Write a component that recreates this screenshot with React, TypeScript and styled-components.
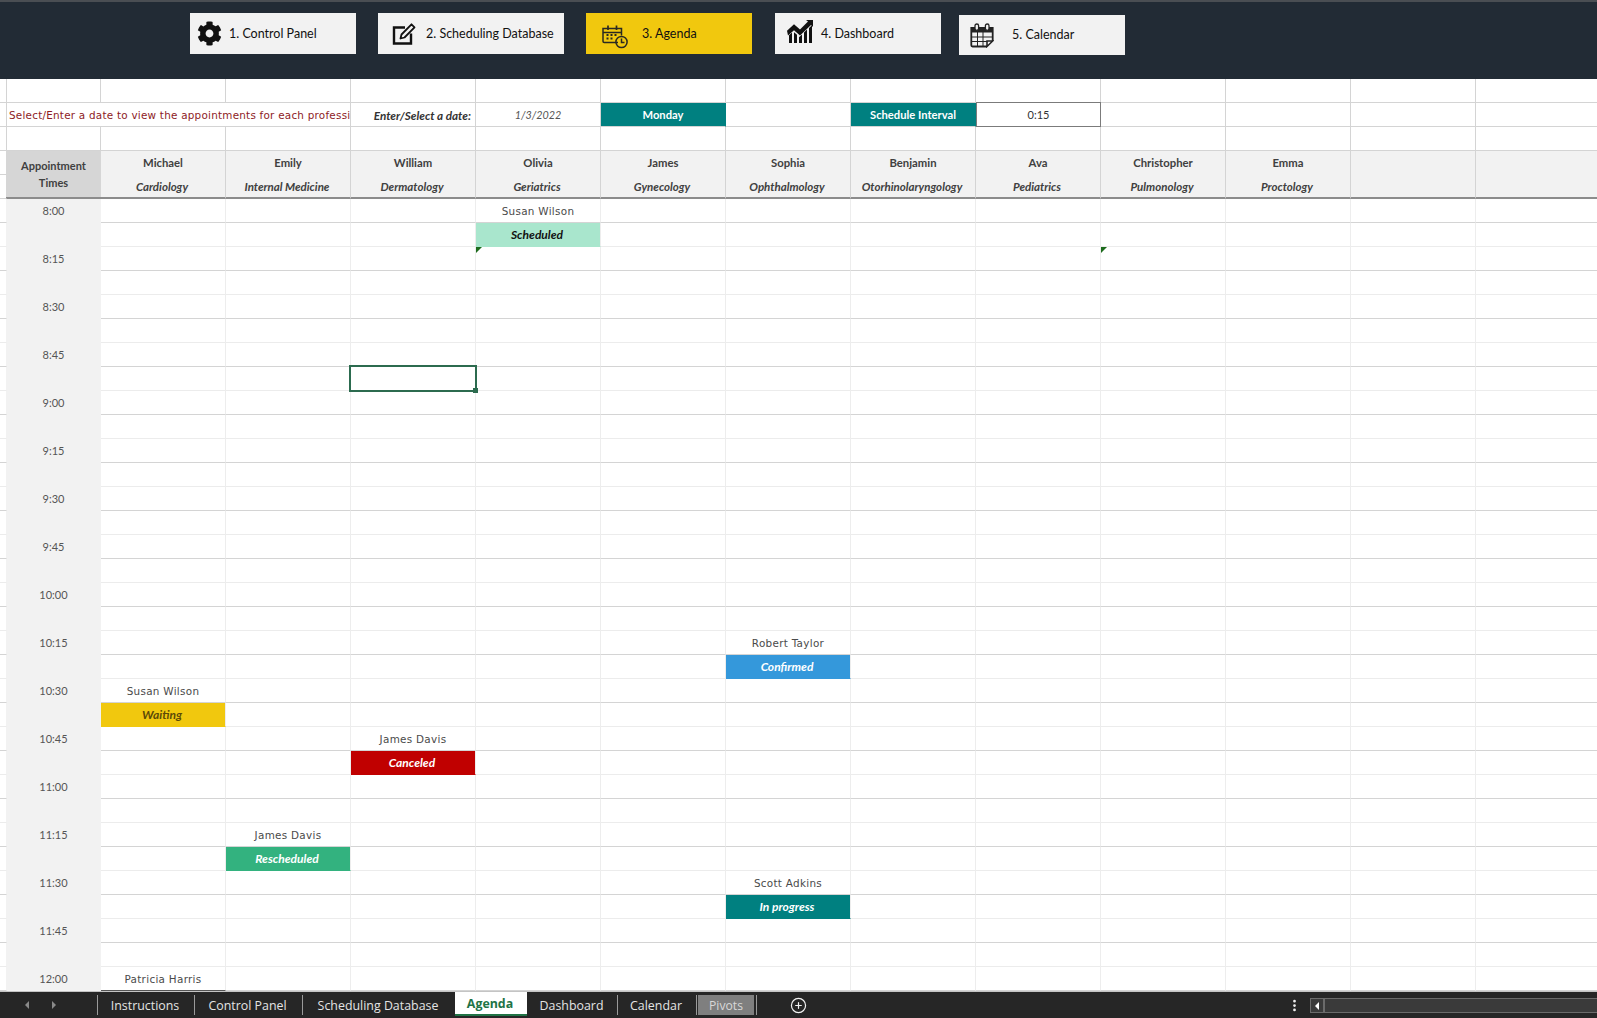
import React from "react";
import styled, { createGlobalStyle } from "styled-components";
import { FaCog } from "react-icons/fa";
import { CirclePlus, EllipsisVertical } from "lucide-react";

const GlobalStyle = createGlobalStyle`
  html, body {
    margin: 0;
    padding: 0;
    background: #fff;
  }
  * {
    box-sizing: border-box;
  }
`;

const Page = styled.div`
  width: 1597px;
  height: 1018px;
  display: flex;
  flex-direction: column;
  overflow: hidden;
  font-family: "Lato", "Liberation Sans", sans-serif;
`;

// top navigation
const NavBar = styled.div`
  height: 79px;
  flex: none;
  display: flex;
  align-items: flex-start;
  padding: 11px 0 0 190px;
  background: #222b35;
  border-top: 2px solid #4a4e53;
`;

const NavButton = styled.div<{ $width: number; $gap: number; $active?: boolean; $drop?: number }>`
  width: ${(p) => p.$width}px;
  height: ${(p) => (p.$drop ? 40 : 41)}px;
  margin-left: ${(p) => p.$gap}px;
  margin-top: ${(p) => p.$drop || 0}px;
  display: flex;
  align-items: center;
  background: ${(p) => (p.$active ? "#f1c80e" : "#f2f2f2")};
  color: #111;
  font-size: 12.5px;
`;

const NavIcon = styled.span<{ $left: number; $width: number; $nudge?: number }>`
  width: ${(p) => p.$width}px;
  margin-left: ${(p) => p.$left}px;
  margin-top: ${(p) => p.$nudge || 0}px;
  flex: none;
  display: flex;
  align-items: center;
  justify-content: center;
  svg {
    display: block;
  }
`;

const NavLabel = styled.span<{ $left: number }>`
  margin-left: ${(p) => p.$left}px;
  padding-bottom: 1px;
  white-space: nowrap;
`;

// worksheet
const Sheet = styled.div`
  flex: none;
  height: 912px;
  overflow: hidden;
  display: grid;
  grid-template-columns: 7px 94px repeat(12, 125px);
  grid-auto-rows: 24px;
  width: 1601px;
  background: #fff;
`;

const Cell = styled.div<{ $soft?: boolean; $softCol?: boolean }>`
  position: relative;
  border-bottom: 1px solid ${(p) => (p.$soft ? "#ececec" : "#d4d4d4")};
  border-right: 1px solid ${(p) => (p.$softCol || p.$soft ? "#ededed" : "#d4d4d4")};
  display: flex;
  align-items: center;
  justify-content: center;
  white-space: nowrap;
  overflow: hidden;
  font-size: 11px;
  color: #444;
`;

const Gutter = styled(Cell)<{ $topRow?: boolean }>`
  border-right: 1px solid ${(p) => (p.$topRow ? "#d4d4d4" : "transparent")};
`;

const NoticeCell = styled(Cell)`
  grid-column: span 3;
  justify-content: flex-start;
  padding-left: 2px;
  color: #8e1b1f;
  font-family: "DejaVu Sans", sans-serif;
  font-size: 10.4px;
  letter-spacing: 0.24px;
`;

const PromptCell = styled(Cell)`
  justify-content: flex-end;
  padding-right: 4px;
  font-style: italic;
  font-weight: 700;
  font-size: 11.7px;
  color: #333;
`;

const DateCell = styled(Cell)`
  font-style: italic;
  font-size: 10.8px;
  color: #555;
`;

const TealCell = styled(Cell)`
  background: #008080;
  border-right-color: #008080;
  color: #fff;
  font-weight: 700;
  font-size: 11.2px;
`;

const IntervalCell = styled(Cell)`
  margin-top: -1px;
  border: 1px solid #7b7b7b;
  color: #333;
  font-size: 11px;
`;

const TimesHead = styled.div`
  grid-row: span 2;
  margin-left: -1px;
  background: #d6d6d6;
  border-bottom: 2px solid #8c8c8c;
  display: flex;
  flex-direction: column;
  align-items: center;
  justify-content: center;
  padding-bottom: 1px;
  font-size: 11px;
  line-height: 17px;
  font-weight: 700;
  color: #404040;
`;

const HeadCell = styled(Cell)<{ $lower?: boolean }>`
  background: #f2f2f2;
  border-bottom: ${(p) => (p.$lower ? "2px solid #8c8c8c" : "0")};
  font-size: ${(p) => (p.$lower ? "11.5px" : "11.3px")};
  font-style: ${(p) => (p.$lower ? "italic" : "normal")};
  font-weight: 700;
  color: #404040;
  padding: ${(p) => (p.$lower ? "0 2px 0 0" : "0 0 2px 0")};
`;

const TimeCell = styled.div`
  margin-left: -1px;
  background: #f2f2f2;
  display: flex;
  align-items: center;
  justify-content: center;
  padding-bottom: 1px;
  font-size: 11px;
  color: #555;
`;

const ClientCell = styled(Cell)<{ $underline?: boolean }>`
  font-family: "DejaVu Sans", sans-serif;
  font-size: 10.4px;
  letter-spacing: 0.3px;
  color: #4a4a4a;
  ${(p) => (p.$underline ? "border-bottom: 1px solid #555;" : "")}
`;

const StatusCell = styled(Cell)<{ $bg: string; $ink: string }>`
  background: ${(p) => p.$bg};
  color: ${(p) => p.$ink};
  border-bottom-color: ${(p) => p.$bg};
  font-style: italic;
  font-weight: 700;
  font-size: 12px;
  padding-right: 2px;
`;

const CommentMark = styled.i`
  position: absolute;
  left: 0;
  top: 0;
  width: 6px;
  height: 6px;
  background: #1c6b1c;
  clip-path: polygon(0 0, 100% 0, 0 100%);
`;

const Selection = styled.div`
  position: absolute;
  left: -2px;
  top: -2px;
  right: -2px;
  bottom: -2px;
  border: 2px solid #2c6b4f;
`;

const SelectionHandle = styled.i`
  position: absolute;
  right: -3px;
  bottom: -3px;
  width: 5px;
  height: 5px;
  background: #2c6b4f;
`;

const SelectedCell = styled(Cell)`
  overflow: visible;
  z-index: 2;
`;

// sheet tabs
const TabBar = styled.div`
  flex: 1;
  display: flex;
  align-items: stretch;
  background: #262626;
  border-top: 1px solid #c4c4c4;
  color: #e4e4e4;
  font-family: "Open Sans", "Liberation Sans", sans-serif;
`;

const TabArrows = styled.div`
  width: 97px;
  flex: none;
  display: flex;
  align-items: center;
  gap: 21px;
  padding: 0 0 0 24px;
  svg {
    display: block;
  }
`;

const Tab = styled.div<{ $width: number; $sep?: boolean }>`
  width: ${(p) => p.$width}px;
  flex: none;
  margin: 3px 0;
  padding-right: 2px;
  display: flex;
  align-items: center;
  justify-content: center;
  font-size: 12.4px;
  border-left: 1px solid ${(p) => (p.$sep ? "#9a9a9a" : "transparent")};
`;

const ActiveTab = styled(Tab)`
  margin: 0 0 2px 0;
  background: #fff;
  border-left: 0;
  border-bottom: 2px solid #217346;
  color: #217346;
  font-weight: 700;
`;

const GreyTab = styled.div`
  width: 56px;
  flex: none;
  margin: 3px 2px 3px 1px;
  display: flex;
  align-items: center;
  justify-content: center;
  font-size: 12.2px;
  color: #d8d8d8;
  background: #7f7f7f;
`;

const TabEnd = styled.div`
  width: 1px;
  flex: none;
  margin: 3px 0;
  background: #9a9a9a;
`;

const AddTab = styled.div`
  width: 17px;
  flex: none;
  margin-left: 33px;
  display: flex;
  align-items: center;
  color: #f2f2f2;
`;

const SheetMenu = styled.div`
  margin-left: 479px;
  width: 16px;
  flex: none;
  display: flex;
  align-items: center;
  justify-content: center;
  color: #f2f2f2;
`;

const ScrollBar = styled.div`
  margin: 6px 0 5px 8px;
  flex: 1;
  display: flex;
  border: 1px solid #6b6b6b;
  border-right: 0;
  background: #3a3a3a;
`;

const ScrollButton = styled.div`
  width: 14px;
  flex: none;
  display: flex;
  align-items: center;
  justify-content: center;
  border-right: 2px solid #6b6b6b;
`;

const GearIcon = () => <FaCog size={25} color="#111" />;

const EditIcon = () => (
  <svg width="24" height="22" viewBox="0 0 24 22" fill="none" stroke="#111">
    <path d="M13 4.5H2v16h17V10.5" strokeWidth="2.4" />
    <path d="M8.5 15.5l1-4L19.5 1.3l3 3L12.5 14.5z" strokeWidth="1.8" strokeLinejoin="round" />
  </svg>
);

const AgendaIcon = () => (
  <svg width="26" height="25" viewBox="0 0 26 25" fill="none" stroke="#2b2a22" strokeWidth="1.5">
    <path d="M16 18.5H2.2a1.2 1.2 0 0 1-1.2-1.2V4.5h18.5v7" />
    <path d="M1 8.5h18.5" />
    <path d="M6 1.5v4.5M14.5 1.5v4.5" strokeWidth="1.7" />
    <path d="M4.5 11h2M8.5 11h2M12.5 11h2M4.5 14.5h2M8.5 14.5h2" strokeWidth="1.9" />
    <circle cx="19.5" cy="18" r="5.6" />
    <path d="M19.5 14.5V18.5h3" />
  </svg>
);

const TrendIcon = () => (
  <svg width="26" height="23" viewBox="0 0 26 23" fill="#111">
    <path d="M0 10.8L7 4.3l6 5.2L21 1.6 19 0h7v7l-2-2-11 10.6-6-5.3-6 5.3z" />
    <path d="M2 15.2l3-2.6V23H2zM7 12.2l3 2.6V23H7zM12 17.2l3-2.8V23h-3zM17 12.6l3-3V23h-3zM22 8l3-2.8V23h-3z" />
  </svg>
);

const CalendarIcon = () => (
  <svg width="24" height="25" viewBox="0 0 24 25" fill="none" stroke="#222">
    <path d="M17 23.5H2.5a1.2 1.2 0 0 1-1.2-1.2V5h21.4v13" strokeWidth="1.8" />
    <path d="M1.5 5.2h21V9h-21z" fill="#222" strokeWidth="1" />
    <path d="M17 23.5l5.7-5.5H17z" strokeWidth="1.6" />
    <path d="M1.5 14h21M1.5 18.5H17M7.5 9v14M13 9v14" strokeWidth="1" />
    <rect x="5" y="1" width="3.6" height="6.4" rx="1.8" fill="#f2f2f2" strokeWidth="1.3" />
    <rect x="15.4" y="1" width="3.6" height="6.4" rx="1.8" fill="#f2f2f2" strokeWidth="1.3" />
  </svg>
);

const navItems = [
  { label: "1. Control Panel", width: 166, gap: 0, iconLeft: 7, iconWidth: 25, labelLeft: 7, icon: <GearIcon /> },
  { label: "2. Scheduling Database", width: 186, gap: 22, iconLeft: 14, iconWidth: 24, labelLeft: 10, icon: <EditIcon /> },
  { label: "3. Agenda", width: 166, gap: 22, iconLeft: 16, iconWidth: 26, labelLeft: 14, icon: <AgendaIcon />, active: true, nudge: 5 },
  { label: "4. Dashboard", width: 166, gap: 23, iconLeft: 12, iconWidth: 26, labelLeft: 8, icon: <TrendIcon />, nudge: -5 },
  { label: "5. Calendar", width: 166, gap: 18, iconLeft: 11, iconWidth: 24, labelLeft: 18, icon: <CalendarIcon />, drop: 2 },
];

const doctors = [
  ["Michael", "Cardiology"],
  ["Emily", "Internal Medicine"],
  ["William", "Dermatology"],
  ["Olivia", "Geriatrics"],
  ["James", "Gynecology"],
  ["Sophia", "Ophthalmology"],
  ["Benjamin", "Otorhinolaryngology"],
  ["Ava", "Pediatrics"],
  ["Christopher", "Pulmonology"],
  ["Emma", "Proctology"],
  ["", ""],
  ["", ""],
];

// row = index in the schedule, two rows per time slot
const appointments = [
  { row: 0, col: 3, name: "Susan Wilson", status: "Scheduled", bg: "#a9e6cd", ink: "#111" },
  { row: 18, col: 5, name: "Robert Taylor", status: "Confirmed", bg: "#3498db", ink: "#fff" },
  { row: 20, col: 0, name: "Susan Wilson", status: "Waiting", bg: "#f1c80e", ink: "#5c4a08" },
  { row: 22, col: 2, name: "James Davis", status: "Canceled", bg: "#c00000", ink: "#fff" },
  { row: 26, col: 1, name: "James Davis", status: "Rescheduled", bg: "#33b27f", ink: "#fff" },
  { row: 28, col: 5, name: "Scott Adkins", status: "In progress", bg: "#008080", ink: "#fff" },
];

const ROWS = 33;
const COLS = 12;

const timeLabel = (row: number) => {
  const minutes = 8 * 60 + (row / 2) * 15;
  return `${Math.floor(minutes / 60)}:${String(minutes % 60).padStart(2, "0")}`;
};

const blanks = (prefix: string, count: number) =>
  Array.from({ length: count }, (_, i) => <Cell key={`${prefix}${i}`} />);

const ScheduleCell = ({ row, col }: { row: number; col: number }) => {
  const soft = row % 2 === 1;
  const name = appointments.find((a) => a.row === row && a.col === col);
  const status = appointments.find((a) => a.row + 1 === row && a.col === col);

  if (name) {
    return <ClientCell $softCol>{name.name}</ClientCell>;
  }
  if (status) {
    return (
      <StatusCell $soft={soft} $softCol $bg={status.bg} $ink={status.ink}>
        {status.status}
      </StatusCell>
    );
  }
  if (row === 32 && col === 0) {
    return (
      <ClientCell $softCol $underline>
        Patricia Harris
      </ClientCell>
    );
  }
  if (row === 7 && col === 2) {
    return (
      <SelectedCell $soft $softCol>
        <Selection>
          <SelectionHandle />
        </Selection>
      </SelectedCell>
    );
  }
  return (
    <Cell $soft={soft} $softCol>
      {row === 2 && (col === 3 || col === 8) ? <CommentMark /> : null}
    </Cell>
  );
};

const Arrow = ({ flip, color }: { flip?: boolean; color: string }) => (
  <svg width="6" height="8" viewBox="0 0 6 8" fill={color}>
    <path d={flip ? "M1 0l4 4-4 4z" : "M5 0L1 4l4 4z"} />
  </svg>
);

export default function App() {
  return (
    <Page>
      <GlobalStyle />
      <NavBar>
        {navItems.map((item) => (
          <NavButton key={item.label} $width={item.width} $gap={item.gap} $active={item.active} $drop={item.drop}>
            <NavIcon $left={item.iconLeft} $width={item.iconWidth} $nudge={item.nudge}>
              {item.icon}
            </NavIcon>
            <NavLabel $left={item.labelLeft}>{item.label}</NavLabel>
          </NavButton>
        ))}
      </NavBar>

      <Sheet>
        {/* row above the date */}
        <Gutter $topRow />
        {blanks("a", COLS + 1)}

        {/* date row */}
        <Gutter $topRow />
        <NoticeCell>Select/Enter a date to view the appointments for each professi</NoticeCell>
        <PromptCell>Enter/Select a date:</PromptCell>
        <DateCell>1/3/2022</DateCell>
        <TealCell>Monday</TealCell>
        <Cell />
        <TealCell>Schedule Interval</TealCell>
        <IntervalCell>0:15</IntervalCell>
        {blanks("b", 4)}

        {/* spacer row */}
        <Gutter $topRow />
        {blanks("c", COLS + 1)}

        {/* doctor names and specialties */}
        <Gutter />
        <TimesHead>
          <span>Appointment</span>
          <span>Times</span>
        </TimesHead>
        {doctors.map(([name], i) => (
          <HeadCell key={i}>{name}</HeadCell>
        ))}
        <Gutter />
        {doctors.map(([, field], i) => (
          <HeadCell key={i} $lower>
            {field}
          </HeadCell>
        ))}

        {/* schedule */}
        {Array.from({ length: ROWS }, (_, row) => (
          <React.Fragment key={row}>
            <Gutter $soft={row % 2 === 1} />
            <TimeCell>{row % 2 === 0 ? timeLabel(row) : ""}</TimeCell>
            {Array.from({ length: COLS }, (_, col) => (
              <ScheduleCell key={col} row={row} col={col} />
            ))}
          </React.Fragment>
        ))}
      </Sheet>

      <TabBar>
        <TabArrows>
          <Arrow color="#8a8a8a" />
          <Arrow color="#8a8a8a" flip />
        </TabArrows>
        <Tab $width={97} $sep>Instructions</Tab>
        <Tab $width={108} $sep>Control Panel</Tab>
        <Tab $width={153} $sep>Scheduling Database</Tab>
        <ActiveTab $width={72}>Agenda</ActiveTab>
        <Tab $width={90}>Dashboard</Tab>
        <Tab $width={79} $sep>Calendar</Tab>
        <TabEnd />
        <GreyTab>Pivots</GreyTab>
        <TabEnd />
        <AddTab>
          <CirclePlus size={17} strokeWidth={1.7} />
        </AddTab>
        <SheetMenu>
          <EllipsisVertical size={15} strokeWidth={2.4} />
        </SheetMenu>
        <ScrollBar>
          <ScrollButton>
            <Arrow color="#fff" />
          </ScrollButton>
        </ScrollBar>
      </TabBar>
    </Page>
  );
}
